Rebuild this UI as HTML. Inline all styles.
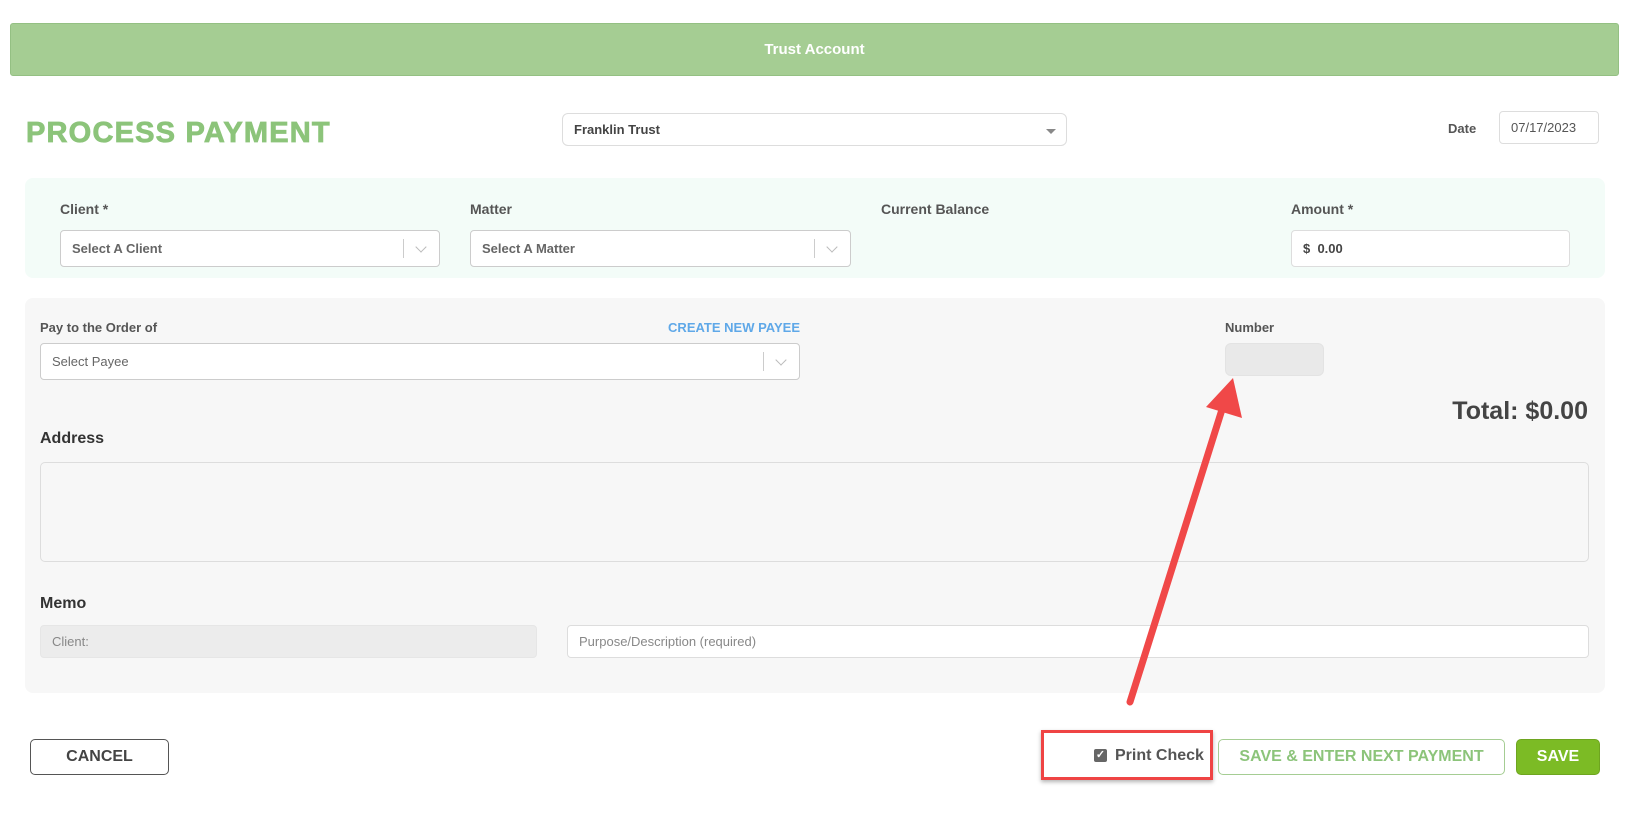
<!DOCTYPE html>
<html><head><style>
*{box-sizing:border-box;margin:0;padding:0}
body{width:1625px;height:826px;background:#fff;font-family:"Liberation Sans",Arial,sans-serif;position:relative;overflow:hidden;color:#444}
.a{position:absolute}
.lbl{font-size:14px;font-weight:bold;color:#555}
.inp{position:absolute;background:#fff;border:1px solid #ccc;border-radius:4px;font-size:13px;color:#666;padding-left:11px;display:flex;align-items:center}
.dd{position:absolute;right:0;top:8px;bottom:8px;width:36px;border-left:1px solid #ccc}
.dd:after{content:"";position:absolute;left:13px;top:4px;width:7px;height:7px;border-right:1.5px solid #bbb;border-bottom:1.5px solid #bbb;transform:rotate(45deg)}
.btn{position:absolute;border-radius:5px;font-size:16px;font-weight:bold;display:flex;align-items:center;justify-content:center}
</style></head><body>
<div class="a" style="left:10px;top:23px;width:1609px;height:53px;background:#a5cd93;border:1px solid #94c083;border-radius:3px;color:#fff;font-weight:bold;font-size:15px;display:flex;align-items:center;justify-content:center">Trust Account</div>
<div class="a" style="left:26px;top:117px;font-size:29px;font-weight:900;color:#8cc47a;letter-spacing:1.2px;-webkit-text-stroke:0.8px #8cc47a">PROCESS PAYMENT</div>
<div class="inp" style="left:562px;top:113px;width:505px;height:33px;border-color:#ddd;font-weight:bold;color:#444;border-radius:6px">Franklin Trust<span class="a" style="right:10px;top:15px;border:5px solid transparent;border-top:5px solid #888"></span></div>
<div class="a lbl" style="left:1448px;top:121px;font-size:13px">Date</div>
<div class="inp" style="left:1499px;top:111px;width:100px;height:33px;border-color:#ddd;font-size:13px;color:#555">07/17/2023</div>
<div class="a" style="left:25px;top:178px;width:1580px;height:100px;background:#f3fcf8;border-radius:8px"></div>
<div class="a lbl" style="left:60px;top:201px">Client *</div>
<div class="a lbl" style="left:470px;top:201px">Matter</div>
<div class="a lbl" style="left:881px;top:201px">Current Balance</div>
<div class="a lbl" style="left:1291px;top:201px">Amount *</div>
<div class="inp" style="left:60px;top:230px;width:380px;height:37px;font-weight:bold">Select A Client<div class="dd"></div></div>
<div class="inp" style="left:470px;top:230px;width:381px;height:37px;font-weight:bold">Select A Matter<div class="dd"></div></div>
<div class="inp" style="left:1291px;top:230px;width:279px;height:37px;border-color:#ddd;font-weight:bold;color:#444">$&nbsp;&nbsp;0.00</div>
<div class="a" style="left:25px;top:298px;width:1580px;height:395px;background:#f7f7f7;border-radius:8px"></div>
<div class="a lbl" style="left:40px;top:320px;font-size:13px">Pay to the Order of</div>
<div class="a" style="left:658px;top:320px;width:142px;text-align:right;font-size:13px;font-weight:bold;color:#5fa8e8">CREATE NEW PAYEE</div>
<div class="inp" style="left:40px;top:343px;width:760px;height:37px">Select Payee<div class="dd"></div></div>
<div class="a lbl" style="left:1225px;top:320px;font-size:13px">Number</div>
<div class="a" style="left:1225px;top:343px;width:99px;height:33px;background:#e9e9e9;border-radius:6px;border:1px solid #e3e3e3"></div>
<div class="a" style="right:37px;top:397px;font-size:25px;font-weight:bold;color:#444">Total: $0.00</div>
<div class="a lbl" style="left:40px;top:430px;font-size:16px;color:#333">Address</div>
<div class="a" style="left:40px;top:462px;width:1549px;height:100px;border:1px solid #ddd;border-radius:5px;background:#f7f7f7"></div>
<div class="a lbl" style="left:40px;top:595px;font-size:16px;color:#333">Memo</div>
<div class="inp" style="left:40px;top:625px;width:497px;height:33px;background:#ececec;border-color:#e6e6e6;color:#888;font-size:13px">Client:</div>
<div class="inp" style="left:567px;top:625px;width:1022px;height:33px;border-color:#ddd;color:#888;font-size:13px">Purpose/Description (required)</div>
<div class="btn" style="left:30px;top:739px;width:139px;height:36px;border:1px solid #555;color:#444">CANCEL</div>
<div class="a" style="left:1041px;top:730px;width:172px;height:50px;border:3px solid #ef4444;box-shadow:0 2px 4px rgba(0,0,0,.3)"></div>
<div class="a" style="left:1094px;top:749px;width:13px;height:13px;background:#666;border-radius:2px;color:#fff;font-size:11px;font-weight:bold;line-height:13px;text-align:center">✓</div>
<div class="a" style="left:1115px;top:747px;font-size:16px;font-weight:bold;color:#555">Print Check</div>
<div class="btn" style="left:1218px;top:739px;width:287px;height:36px;border:1px solid #a5cd93;color:#8cc47a">SAVE &amp; ENTER NEXT PAYMENT</div>
<div class="btn" style="left:1516px;top:739px;width:84px;height:36px;background:#7cbb25;border:1px solid #6ea520;color:#fff">SAVE</div>
<svg class="a" style="left:0;top:0" width="1625" height="826">
<line x1="1130" y1="702" x2="1225" y2="400" stroke="#f04848" stroke-width="7" stroke-linecap="round"/>
<polygon points="1233,378 1242,418 1206,407" fill="#f04848"/>
</svg>
</body></html>
